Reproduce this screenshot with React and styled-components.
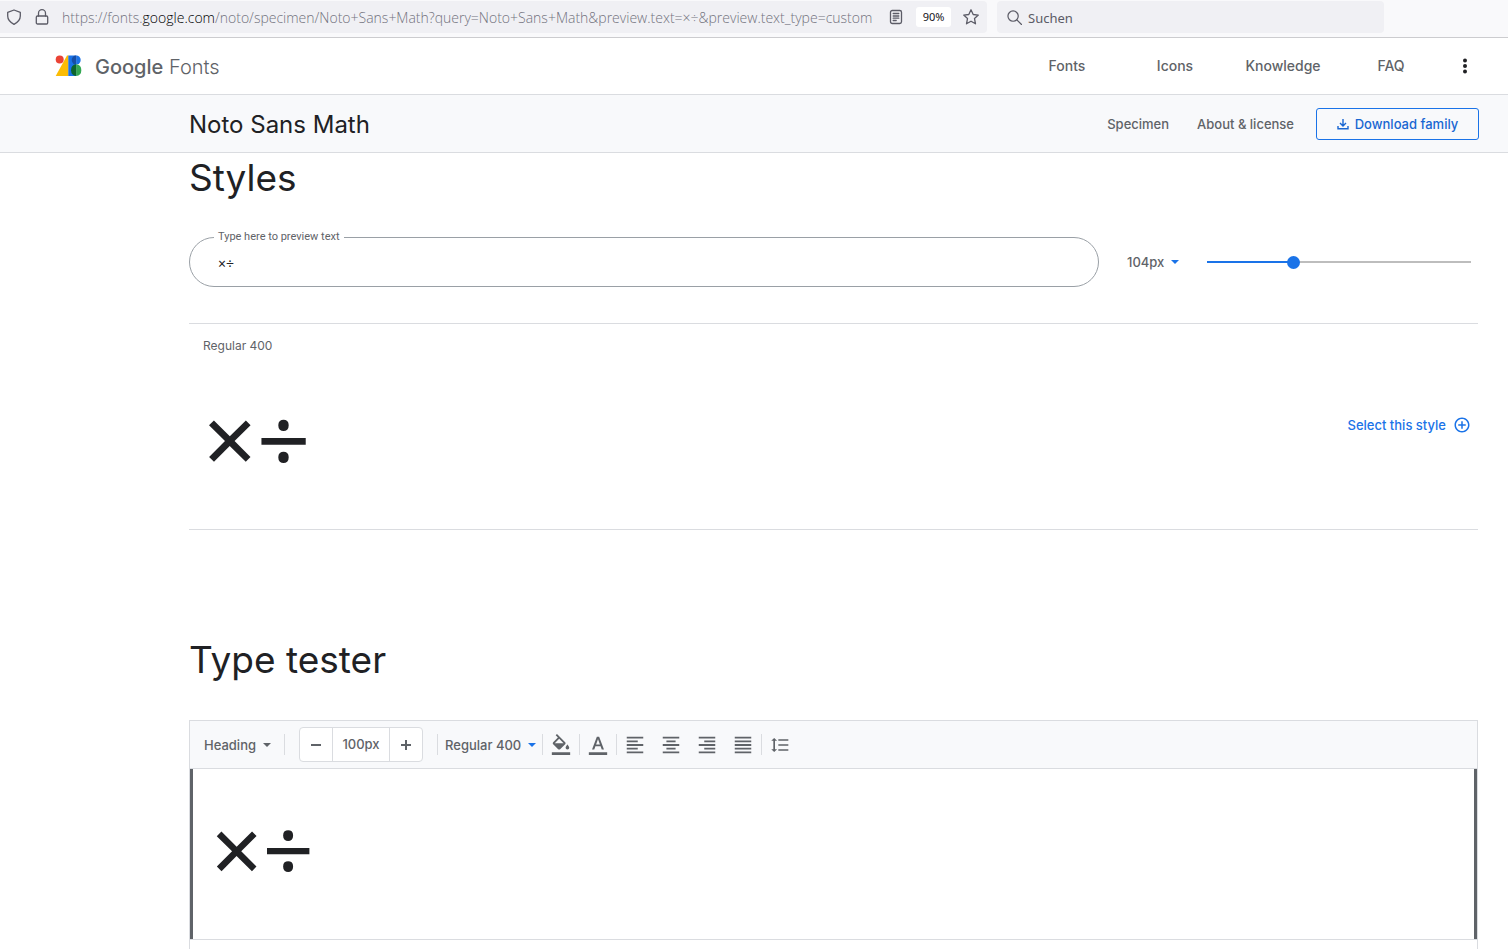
import React, { useState } from 'react';
import styled, { createGlobalStyle, css } from 'styled-components';

const GlobalStyle = createGlobalStyle`
  * {
    box-sizing: border-box;
  }
  body {
    margin: 0;
    background: #fff;
    color: #202124;
    font-family: Inter, 'Liberation Sans', sans-serif;
    font-size: 13px;
    line-height: 20px;
  }
  button, input, select, textarea {
    margin: 0;
    padding: 0;
    border: 0;
    background: none;
    color: inherit;
    font: inherit;
  }
  h1, h2, p {
    margin: 0;
    font-weight: 400;
  }
  svg {
    display: block;
    flex: none;
  }
`;

const Page = styled.div`
  display: flex;
  flex-direction: column;
  height: 100vh;
  overflow: hidden;
`;

const BrowserBar = styled.div`
  display: flex;
  flex: none;
  gap: 10px;
  height: 38px;
  padding: 1px 124px 4px 0;
  background: #f9f9fb;
  border-bottom: 1px solid #cccccf;
  color: #5b5b66;
  font-family: 'Noto Sans', 'Open Sans', sans-serif;
`;

const UrlField = styled.div`
  display: flex;
  flex: 1;
  align-items: center;
  gap: 12px;
  padding: 0 8px 0 6px;
  background: #f0f0f4;
  border-radius: 0 4px 4px 0;
`;

const Url = styled.div`
  flex: 1;
  padding-top: 2px;
  color: #73737e;
  font-family: 'Open Sans', 'Noto Sans', sans-serif;
  font-size: 14px;
  font-weight: 300;
  white-space: nowrap;
  strong {
    color: #000;
    font-weight: 300;
  }
`;

const IconButton = styled.button`
  display: flex;
  align-items: center;
  justify-content: center;
`;

const Zoom = styled.button`
  width: 35px;
  height: 20px;
  background: #fff;
  border-radius: 3px;
  color: #15141a;
  font-size: 11px;
`;

const SearchField = styled.label`
  display: flex;
  align-items: center;
  gap: 6px;
  width: 387px;
  padding: 0 10px;
  background: #f0f0f4;
  border-radius: 4px;
  input {
    flex: 1;
    padding-top: 2px;
    outline: 0;
  }
  input::placeholder {
    color: #5b5b66;
    opacity: 1;
  }
`;

const Header = styled.header`
  display: flex;
  flex: none;
  align-items: center;
  justify-content: space-between;
  height: 57px;
  padding: 0 34px 0 55px;
  border-bottom: 1px solid #dadce0;
`;

const Brand = styled.a`
  display: flex;
  align-items: center;
  gap: 12px;
  color: #5f6368;
  font-size: 20px;
  font-weight: 300;
  line-height: 24px;
  text-decoration: none;
  div {
    padding-top: 2px;
  }
  span {
    font-weight: 500;
  }
`;

const Nav = styled.nav`
  display: flex;
  align-items: center;
`;

const NavLink = styled.a`
  width: 108px;
  color: #5f6368;
  font-size: 14px;
  font-weight: 500;
  text-align: center;
  text-decoration: none;
`;

const MoreButton = styled(IconButton)`
  margin-left: 11px;
`;

const SubHeader = styled.div`
  display: flex;
  flex: none;
  align-items: center;
  justify-content: space-between;
  height: 58px;
  padding: 0 29px 0 189px;
  background: #f8f9fb;
  border-bottom: 1px solid #dadce0;
  h1 {
    padding-top: 2px;
    font-size: 24px;
  }
`;

const Actions = styled.div`
  display: flex;
  align-items: center;
  gap: 28px;
`;

const TextLink = styled.a`
  color: #5f6368;
  font-weight: 500;
  text-decoration: none;
`;

const DownloadButton = styled.button`
  display: flex;
  align-items: center;
  justify-content: center;
  gap: 6px;
  width: 163px;
  height: 32px;
  margin-left: -6px;
  border: 1px solid #1a73e8;
  border-radius: 3px;
  color: #1967d2;
  font-weight: 500;
`;

const Content = styled.main`
  display: flex;
  flex: 1;
  flex-direction: column;
  padding: 0 30px 0 189px;
`;

const SectionTitle = styled.h2`
  flex: none;
  font-size: 37px;
  line-height: 50px;
`;

const Controls = styled.div`
  display: flex;
  align-items: center;
  height: 56px;
  margin: 28px 0 36px;
  padding-right: 7px;
`;

const PreviewField = styled.fieldset`
  flex: 1;
  height: 56px;
  margin: 0;
  padding: 0 28px 0 24px;
  border: 1px solid #9aa0a6;
  border-radius: 25px;
  legend {
    padding: 0 4px;
    color: #5f6368;
    font-family: Roboto, sans-serif;
    font-size: 11px;
    line-height: 12px;
  }
  input {
    width: 100%;
    height: 28px;
    padding: 0 4px;
    margin-top: 6px;
    font-family: 'Noto Sans', sans-serif;
    font-size: 14px;
    outline: 0;
  }
`;

const SizeControls = styled.div`
  display: flex;
  align-items: center;
  gap: 28px;
  padding: 6px 0 0 28px;
`;

const SelectBox = styled.div`
  display: flex;
  align-items: center;
  gap: 6px;
  color: #5f6368;
  font-weight: 500;
  select {
    appearance: none;
    outline: 0;
  }
`;

const Slider = styled.input`
  appearance: none;
  width: 264px;
  height: 2px;
  background: linear-gradient(#1a73e8, #1a73e8) 0 0 / var(--fill) 100% no-repeat #bdbdbd;
  &::-webkit-slider-thumb {
    appearance: none;
    width: 13px;
    height: 13px;
    background: #1a73e8;
    border-radius: 50%;
  }
`;

const StyleRow = styled.section`
  display: flex;
  flex: none;
  justify-content: space-between;
  height: 207px;
  padding: 12px 7px 16px 14px;
  border: solid #dadce0;
  border-width: 1px 0;
  color: #5f6368;
`;

const StyleName = styled.p`
  font-size: 12px;
`;

const glyphs = css`
  color: #202124;
  font-family: 'Noto Sans', sans-serif;
  font-weight: 400;
`;

const Sample = styled.p`
  ${glyphs}
  margin-top: 18px;
  line-height: 128px;
`;

const SelectStyle = styled.button`
  display: flex;
  align-items: center;
  align-self: center;
  gap: 7px;
  color: #1a73e8;
  font-weight: 500;
`;

const TesterTitle = styled(SectionTitle)`
  margin: 105px 0 35px;
`;

const Tester = styled.section`
  flex: 1;
  border: 1px solid #dadce0;
  border-bottom: 0;
`;

const Toolbar = styled.div`
  display: flex;
  align-items: center;
  height: 48px;
  padding-left: 14px;
  background: #f8f9fb;
  border-bottom: 1px solid #dadce0;
  color: #5f6368;
  font-weight: 500;
`;

const Divider = styled.span`
  width: 1px;
  height: 21px;
  margin: 0 ${({ $right = 0 }) => $right}px 0 ${({ $left = 0 }) => $left}px;
  background: #dadce0;
`;

const Stepper = styled.div`
  display: flex;
  width: 124px;
  height: 35px;
  background: #fff;
  border: 1px solid #dadce0;
  border-radius: 4px;
  button {
    display: flex;
    align-items: center;
    justify-content: center;
    width: 32px;
  }
  output {
    flex: 1;
    border: solid #dadce0;
    border-width: 0 1px;
    line-height: 33px;
    text-align: center;
  }
`;

const Tool = styled(IconButton)`
  width: 36px;
  height: 36px;
`;

const Editor = styled.textarea`
  ${glyphs}
  display: block;
  width: 100%;
  height: 170px;
  padding: 14px 18px 0;
  border: solid #5f6368;
  border-width: 0 3px;
  line-height: 130px;
  outline: 0;
  overflow: hidden;
  resize: none;
`;

const EditorFooter = styled.div`
  border-top: 1px solid #dadce0;
`;

const Hairline = ({ size = 16, children }) => (
  <svg width={size} height={size} viewBox="0 0 16 16" fill="none" stroke="#5b5b66" strokeWidth="1.3" strokeLinecap="round" strokeLinejoin="round">
    {children}
  </svg>
);

const Material = ({ size = 22, children }) => (
  <svg width={size} height={size} viewBox="0 0 24 24" fill="currentColor">
    {children}
  </svg>
);

const Caret = ({ color = '#5f6368' }) => (
  <svg width="8" height="4" viewBox="0 0 8 4" fill={color}>
    <path d="M0 0h8L4 4z" />
  </svg>
);

const Logo = () => (
  <svg width="28" height="22" viewBox="0 0 28 22">
    <path fill="#fbbc04" d="M12 .5h1.500V21H.700z" />
    <circle cx="4.700" cy="4.500" r="4" fill="#ea4335" />
    <path fill="#1a73e8" d="M13.300.5h7.900V21h-7.900z" />
    <path fill="#1a73e8" d="M21.200.5a4.500 4.500 0 0 1 0 9z" />
    <path fill="#174ea6" d="M21.200.5a4.500 4.500 0 0 0 0 9z" />
    <path fill="#34a853" d="M21.200 9.300a5.900 5.900 0 0 1 0 11.700z" />
    <path fill="#0d652d" d="M21.200 9.300a5.900 5.900 0 0 0 0 11.700z" />
  </svg>
);

const aligns = [
  ['Align left', 'M15 15H3v2h12v-2zm0-8H3v2h12V7zM3 13h18v-2H3v2zm0 8h18v-2H3v2zM3 3v2h18V3H3z'],
  ['Align center', 'M7 15v2h10v-2H7zm-4 6h18v-2H3v2zm0-8h18v-2H3v2zm4-6v2h10V7H7zM3 3v2h18V3H3z'],
  ['Align right', 'M3 21h18v-2H3v2zm6-4h12v-2H9v2zm-6-4h18v-2H3v2zm6-4h12V7H9v2zM3 3v2h18V3H3z'],
  ['Justify', 'M3 21h18v-2H3v2zm0-4h18v-2H3v2zm0-4h18v-2H3v2zm0-4h18V7H3v2zm0-6v2h18V3H3z'],
];

const MIN_SIZE = 12;
const MAX_SIZE = 300;
const PAGE_ZOOM = 0.9;

export default function App() {
  const [text, setText] = useState('×÷');
  const [testerText, setTesterText] = useState('×÷');
  const [size, setSize] = useState(104);
  const [testerSize, setTesterSize] = useState(100);
  const fill = ((size - MIN_SIZE) / (MAX_SIZE - MIN_SIZE)) * 100;

  return (
    <>
      <GlobalStyle />
      <Page>
        <BrowserBar>
          <UrlField>
            <Hairline>
              <path d="M8 1l6.300 2.300V7c0 4-3 6.600-6.300 8.300C4.700 13.600 1.700 11 1.700 7V3.300z" />
            </Hairline>
            <Hairline>
              <rect x="2.300" y="7" width="11.400" height="8" rx="1.200" />
              <path d="M4.500 7V4.200a3.500 3.500 0 0 1 7 0V7" />
            </Hairline>
            <Url role="textbox" aria-label="Address" tabIndex={0}>
              https://fonts.<strong>google.com</strong>
              /noto/specimen/Noto+Sans+Math?query=Noto+Sans+Math&amp;preview.text=×÷&amp;preview.text_type=custom
            </Url>
            <IconButton aria-label="Reader view">
              <Hairline>
                <rect x="2.500" y="1.500" width="11" height="13" rx="1.800" />
                <path d="M5.200 4.500h5.600M5.200 7h5.600M5.200 9.200h5.600M5.200 11.500h3" />
              </Hairline>
            </IconButton>
            <Zoom>90%</Zoom>
            <IconButton aria-label="Bookmark">
              <Hairline>
                <path d="M8 .8l2.200 4.700 5.100.6-3.800 3.500 1 5.200L8 12.200l-4.500 2.600 1-5.200L.7 6.100l5.100-.6z" />
              </Hairline>
            </IconButton>
          </UrlField>
          <SearchField>
            <Hairline size={15}>
              <circle cx="6.500" cy="6.500" r="5.500" />
              <path d="M10.500 10.500l5 5" />
            </Hairline>
            <input type="search" placeholder="Suchen" aria-label="Suchen" />
          </SearchField>
        </BrowserBar>

        <Header>
          <Brand href="#home">
            <Logo />
            <div>
              <span>Google</span> Fonts
            </div>
          </Brand>
          <Nav>
            <NavLink href="#fonts">Fonts</NavLink>
            <NavLink href="#icons">Icons</NavLink>
            <NavLink href="#knowledge">Knowledge</NavLink>
            <NavLink href="#faq">FAQ</NavLink>
            <MoreButton aria-label="More">
              <svg width="18" height="18" viewBox="0 0 18 18" fill="#202124">
                <circle cx="9" cy="3.500" r="2" />
                <circle cx="9" cy="9" r="2" />
                <circle cx="9" cy="14.500" r="2" />
              </svg>
            </MoreButton>
          </Nav>
        </Header>

        <SubHeader>
          <h1>Noto Sans Math</h1>
          <Actions>
            <TextLink href="#specimen">Specimen</TextLink>
            <TextLink href="#about">About &amp; license</TextLink>
            <DownloadButton>
              <svg width="12" height="12" viewBox="0 0 12 12" fill="none" stroke="currentColor" strokeWidth="1.4">
                <path d="M6 1v6.500M3 5l3 3 3-3M1 8v2.800h10V8" />
              </svg>
              Download family
            </DownloadButton>
          </Actions>
        </SubHeader>

        <Content>
          <SectionTitle>Styles</SectionTitle>
          <Controls>
            <PreviewField>
              <legend>
                <label htmlFor="preview">Type here to preview text</label>
              </legend>
              <input id="preview" value={text} onChange={(e) => setText(e.target.value)} />
            </PreviewField>
            <SizeControls>
              <SelectBox>
                <select aria-label="Font size" value={size} onChange={(e) => setSize(+e.target.value)}>
                  <option value={size}>{size}px</option>
                </select>
                <Caret color="#1a73e8" />
              </SelectBox>
              <Slider
                type="range"
                aria-label="Font size slider"
                min={MIN_SIZE}
                max={MAX_SIZE}
                value={size}
                style={{ '--fill': `${fill}%` }}
                onChange={(e) => setSize(+e.target.value)}
              />
            </SizeControls>
          </Controls>

          <StyleRow>
            <div>
              <StyleName>Regular 400</StyleName>
              <Sample style={{ fontSize: Math.round(size * PAGE_ZOOM) }}>{text}</Sample>
            </div>
            <SelectStyle>
              Select this style
              <Material size={18}>
                <path d="M13 7h-2v4H7v2h4v4h2v-4h4v-2h-4V7zm-1-5C6.480 2 2 6.480 2 12s4.480 10 10 10 10-4.480 10-10S17.520 2 12 2zm0 18c-4.410 0-8-3.590-8-8s3.590-8 8-8 8 3.590 8 8-3.590 8-8 8z" />
              </Material>
            </SelectStyle>
          </StyleRow>

          <TesterTitle>Type tester</TesterTitle>
          <Tester>
            <Toolbar>
              <SelectBox>
                <select aria-label="Text type">
                  <option>Heading</option>
                </select>
                <Caret />
              </SelectBox>
              <Divider $left={13} $right={14} />
              <Stepper>
                <button aria-label="Smaller" onClick={() => setTesterSize(testerSize - 1)}>
                  <svg width="10" height="10" viewBox="0 0 10 10" stroke="currentColor" strokeWidth="2">
                    <path d="M0 5h10" />
                  </svg>
                </button>
                <output>{testerSize}px</output>
                <button aria-label="Larger" onClick={() => setTesterSize(testerSize + 1)}>
                  <svg width="10" height="10" viewBox="0 0 10 10" stroke="currentColor" strokeWidth="2">
                    <path d="M0 5h10M5 0v10" />
                  </svg>
                </button>
              </Stepper>
              <Divider $left={14} $right={7} />
              <SelectBox>
                <select aria-label="Font style">
                  <option>Regular 400</option>
                </select>
                <Caret color="#1a73e8" />
              </SelectBox>
              <Divider $left={6} />
              <Tool aria-label="Fill color">
                <Material>
                  <path d="M16.560 8.940 7.620 0 6.210 1.410l2.380 2.380-5.150 5.150a1.490 1.490 0 0 0 0 2.120l5.500 5.500c.29.290.680.440 1.060.440s.770-.150 1.060-.440l5.500-5.500c.590-.580.590-1.530 0-2.120zM5.210 10 10 5.210 14.790 10H5.210zM19 11.500s-2 2.170-2 3.500a2 2 0 1 0 4 0c0-1.330-2-3.500-2-3.500zM2 20h20v3H2z" />
                </Material>
              </Tool>
              <Divider />
              <Tool aria-label="Text color">
                <Material>
                  <path d="M2 20h20v3H2zM5.490 17h2.420l1.270-3.580h5.650L16.090 17h2.420L13.250 3h-2.500L5.490 17zm4.420-5.610 2.030-5.790h.12l2.030 5.790H9.910z" />
                </Material>
              </Tool>
              <Divider />
              {aligns.map(([label, d]) => (
                <Tool key={label} aria-label={label}>
                  <Material>
                    <path d={d} />
                  </Material>
                </Tool>
              ))}
              <Divider />
              <Tool aria-label="Line height">
                <Material size={20}>
                  <path d="M6 7h2.500L5 3.500 1.500 7H4v10H1.500L5 20.500 8.500 17H6V7zm4-2v2h12V5H10zm0 14h12v-2H10v2zm0-6h12v-2H10v2z" />
                </Material>
              </Tool>
            </Toolbar>
            <Editor
              aria-label="Tester text"
              spellCheck={false}
              value={testerText}
              style={{ fontSize: Math.round(testerSize * PAGE_ZOOM) }}
              onChange={(e) => setTesterText(e.target.value)}
            />
            <EditorFooter />
          </Tester>
        </Content>
      </Page>
    </>
  );
}
